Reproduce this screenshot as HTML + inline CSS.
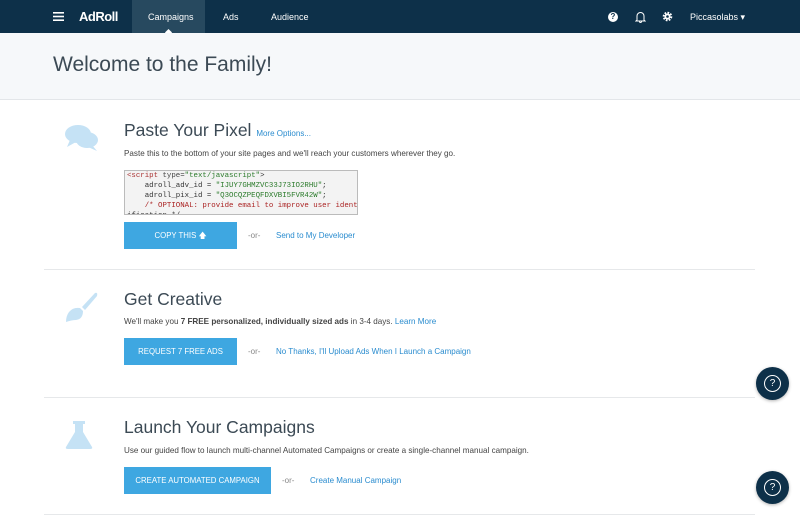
<!DOCTYPE html>
<html><head><style>
*{margin:0;padding:0;box-sizing:border-box}
body{width:800px;height:515px;overflow:hidden;background:#fff;font-family:"Liberation Sans",sans-serif;color:#333;position:relative}
.nav{position:absolute;left:0;top:0;width:800px;height:33px;background:#0d3049}
.nav span{position:absolute;color:#fff;font-size:9px;top:12px}
.tab{position:absolute;left:132px;top:0;width:73px;height:33px;background:#27495f}
.hdr{position:absolute;left:0;top:33px;width:800px;height:67px;background:#f6f8fa;border-bottom:1px solid #e3e6e9}
.hdr h1{position:absolute;left:53px;top:20px;font-weight:normal;font-size:21px;color:#3c4a55}
.sep{position:absolute;left:44px;width:711px;height:1px;background:#e6e8ea}
h2{position:absolute;left:124px;font-weight:normal;font-size:17.5px;color:#3c4a55}
.p{position:absolute;left:124px;font-size:8.1px;color:#444}
.btn{position:absolute;background:#3ea7e1;color:#fff;font-size:7.8px;text-align:center;line-height:27px;height:27px}
.or{position:absolute;font-size:8px;color:#888}
a{color:#2a8ccf;text-decoration:none}
.l{position:absolute;font-size:8px;color:#2a8ccf}
.code{position:absolute;left:124px;top:170px;width:234px;height:45px;border:1px solid #bbb;background:#f3f3f3;font-family:"Liberation Mono",monospace;font-size:7.4px;line-height:10px;padding:0 2px;overflow:hidden;white-space:pre;color:#333}
.fab{position:absolute;left:756px;width:33px;height:33px;border-radius:50%;background:#0d3049;box-shadow:0 1px 3px rgba(0,0,0,.3)}
.fab div{position:absolute;left:8px;top:8px;width:17px;height:17px;border:1.3px solid #fff;border-radius:50%;color:#fff;font-size:10px;text-align:center;line-height:15px}
</style></head><body>
<div class="nav">
<div class="tab"></div>
<svg style="position:absolute;left:53px;top:12px" width="11" height="9"><rect y="0" width="11" height="1.6" fill="#fff"/><rect y="3.7" width="11" height="1.6" fill="#fff"/><rect y="7.4" width="11" height="1.6" fill="#fff"/></svg>
<span style="left:79px;top:9px;font-size:13px;font-weight:bold;letter-spacing:-.5px">AdRoll</span>
<span style="left:148px">Campaigns</span>
<span style="left:223px">Ads</span>
<span style="left:271px">Audience</span>
<div style="position:absolute;left:166px;top:30px;width:5px;height:5px;background:#fff;transform:rotate(45deg)"></div>
<div style="position:absolute;left:608px;top:12px;width:10px;height:10px;border-radius:50%;background:#fff;color:#0d3049;font-size:8px;font-weight:bold;text-align:center;line-height:10px">?</div>
<svg style="position:absolute;left:635px;top:11px" width="11" height="12"><path d="M2 9V5a3.5 3.5 0 0 1 7 0v4l1 1H1z M4.5 10.5a1 1 0 0 0 2 0" fill="none" stroke="#fff" stroke-width="1"/></svg>
<svg style="position:absolute;left:662px;top:11px" width="11" height="11"><circle cx="5.5" cy="5.5" r="3.6" fill="none" stroke="#fff" stroke-width="2.4" stroke-dasharray="1.6 1.2"/><circle cx="5.5" cy="5.5" r="3" fill="#fff"/><circle cx="5.5" cy="5.5" r="1.3" fill="#0d3049"/></svg>
<span style="left:690px">Piccasolabs ▾</span>
</div>
<div class="hdr"><h1>Welcome to the Family!</h1></div>

<svg style="position:absolute;left:64px;top:124px" width="36" height="28"><ellipse cx="14" cy="10" rx="13" ry="9" fill="#c5e2f5"/><path d="M6 16 L3 23 L12 18z" fill="#c5e2f5"/><ellipse cx="23" cy="16" rx="11" ry="8" fill="#c5e2f5"/><path d="M28 21 L33 27 L24 23z" fill="#c5e2f5"/></svg>
<h2 style="top:120px">Paste Your Pixel <a style="font-size:8px">More Options...</a></h2>
<div class="p" style="top:149px">Paste this to the bottom of your site pages and we'll reach your customers wherever they go.</div>
<div class="code"><span style="color:#a33">&lt;script</span> <span style="color:#444">type=</span><span style="color:#2a7a2a">"text/javascript"</span>&gt;
    adroll_adv_id = <span style="color:#2a7a2a">"IJUY7GHMZVC33J73IO2RHU"</span>;
    adroll_pix_id = <span style="color:#2a7a2a">"Q3OCQZPEQFDXVBI5FVR42W"</span>;
    <span style="color:#a22">/* OPTIONAL: provide email to improve user ident</span>
ification */</div>
<div class="btn" style="left:124px;top:222px;width:113px">COPY THIS 🡅</div>
<div class="or" style="left:248px;top:231px">-or-</div>
<div class="l" style="left:276px;top:231px">Send to My Developer</div>
<div class="sep" style="top:269px"></div>

<svg style="position:absolute;left:64px;top:290px" width="34" height="34"><path d="M31 3 L18 17 L21 20 L33 6 Q34 2 31 3z" fill="#c5e2f5"/><path d="M16 18 Q9 17 5 22 Q2 26 2 32 Q8 30 12 30 Q19 29 19 21z" fill="#c5e2f5"/></svg>
<h2 style="top:289px">Get Creative</h2>
<div class="p" style="top:317px">We'll make you <b>7 FREE personalized, individually sized ads</b> in 3-4 days. <a>Learn More</a></div>
<div class="btn" style="left:124px;top:338px;width:113px">REQUEST 7 FREE ADS</div>
<div class="or" style="left:248px;top:347px">-or-</div>
<div class="l" style="left:276px;top:347px">No Thanks, I'll Upload Ads When I Launch a Campaign</div>
<div class="sep" style="top:397px"></div>

<svg style="position:absolute;left:65px;top:420px" width="30" height="30"><rect x="8" y="1" width="12" height="3" fill="#c5e2f5"/><path d="M10 4h8v8l9 15q1 2-2 2H3q-3 0-2-2l9-15z" fill="#c5e2f5"/></svg>
<h2 style="top:417px">Launch Your Campaigns</h2>
<div class="p" style="top:446px">Use our guided flow to launch multi-channel Automated Campaigns or create a single-channel manual campaign.</div>
<div class="btn" style="left:124px;top:467px;width:147px">CREATE AUTOMATED CAMPAIGN</div>
<div class="or" style="left:282px;top:476px">-or-</div>
<div class="l" style="left:310px;top:476px">Create Manual Campaign</div>
<div class="sep" style="top:514px"></div>

<div class="fab" style="top:367px"><div>?</div></div>
<div class="fab" style="top:471px"><div>?</div></div>
</body></html>
